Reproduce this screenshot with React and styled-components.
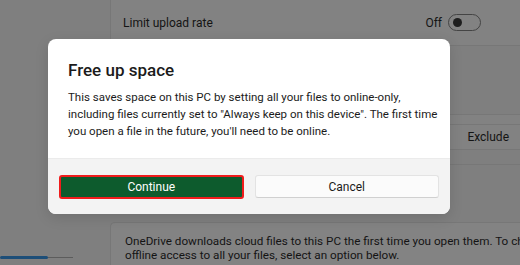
import React from "react";
import styled, { createGlobalStyle } from "styled-components";

const GlobalStyle = createGlobalStyle`
  html, body {
    margin: 0;
    padding: 0;
    width: 520px;
    height: 265px;
    overflow: hidden;
    background: #7f7f7f;
    font-family: Roboto, "Noto Sans", sans-serif;
  }
`;

const Page = styled.div`
  position: relative;
  display: flex;
  width: 520px;
  height: 265px;
  overflow: hidden;
`;

const Sidebar = styled.aside`
  width: 110px;
  flex-shrink: 0;
  display: flex;
  flex-direction: column;
  justify-content: flex-end;
  padding-bottom: 6px;
  box-sizing: border-box;
`;

const Storage = styled.div`
  display: flex;
  align-items: center;
  width: 73px;
`;

const StorageUsed = styled.div`
  width: 48px;
  height: 3px;
  border-radius: 2px;
  background: #1d4e78;
`;

const StorageFree = styled.div`
  flex: 1;
  height: 1px;
  background: #5c5c5c;
`;

const Main = styled.main`
  flex: 1;
  min-width: 0;
  display: flex;
  flex-direction: column;
  overflow: hidden;
`;

const Card = styled.div`
  display: flex;
  align-items: center;
  box-sizing: border-box;
  height: ${p => p.h}px;
  padding: 0 12px;
  background: ${p => (p.dark ? "#7f7f7f" : "#828282")};
  border-left: 1px solid #777;
  border-bottom: 1px solid #777;
  font-size: 12px;
  color: #141414;
`;

const Label = styled.span`
  flex: 1;
`;

const Toggle = styled.span`
  display: inline-flex;
  align-items: center;
  box-sizing: border-box;
  width: 33px;
  height: 17px;
  margin-left: 6px;
  margin-right: 27px;
  padding-left: 4px;
  border: 1px solid #444;
  border-radius: 9px;
  &::before {
    content: "";
    width: 9px;
    height: 9px;
    border-radius: 50%;
    background: #1e1e1e;
  }
`;

const Action = styled.span`
  margin-left: auto;
  margin-right: -1px;
`;

const InfoCard = styled.div`
  margin-top: auto;
  box-sizing: border-box;
  height: 43px;
  padding: 11px 0 0 14px;
  background: #838383;
  border-left: 1px solid #777;
  border-top: 1px solid #777;
  border-top-left-radius: 5px;
  font-size: 11.7px;
  line-height: 14px;
  color: #141414;
  white-space: nowrap;
`;

const Dialog = styled.div`
  position: absolute;
  left: 48px;
  top: 39px;
  width: 402px;
  height: 175px;
  display: flex;
  flex-direction: column;
  border-radius: 8px;
  overflow: hidden;
  background: #fff;
  box-shadow: 0 4px 14px rgba(0, 0, 0, 0.12);
`;

const Body = styled.div`
  flex: 1;
  padding: 19px 12px 0 20px;
`;

const Title = styled.h2`
  margin: 0 0 7px;
  font-size: 17px;
  font-weight: 500;
  line-height: 24px;
  color: #1b1b1b;
`;

const Text = styled.p`
  margin: 0;
  font-size: 11.5px;
  line-height: 17px;
  color: #1b1b1b;
`;

const Footer = styled.div`
  height: 56px;
  box-sizing: border-box;
  display: grid;
  grid-template-columns: 1fr 1fr;
  gap: 11px;
  align-items: center;
  padding: 0 11px;
  background: #f3f3f3;
  border-top: 1px solid #ebebeb;
`;

const Button = styled.button`
  height: ${p => (p.primary ? 24 : 23)}px;
  box-sizing: border-box;
  border-radius: 3px;
  font-family: inherit;
  font-size: 12px;
  color: ${p => (p.primary ? "#fff" : "#1b1b1b")};
  background: ${p => (p.primary ? "#0d5b2d" : "#fbfbfb")};
  border: ${p => (p.primary ? "2px solid #f01c1c" : "1px solid #e3e3e3")};
  border-bottom-color: ${p => (p.primary ? "#f01c1c" : "#d0d0d0")};
  padding: 0;
`;

export default function App() {
  return (
    <>
      <GlobalStyle />
      <Page>
        <Sidebar>
          <Storage>
            <StorageUsed />
            <StorageFree />
          </Storage>
        </Sidebar>
        <Main>
          <Card h={46}>
            <Label>Limit upload rate</Label>
            Off
            <Toggle />
          </Card>
          <Card h={69} dark />
          <Card h={10} />
          <Card h={25}>
            <Action>Exclude</Action>
          </Card>
          <Card h={15} dark />
          <InfoCard>
            OneDrive downloads cloud files to this PC the first time you open them. To change
            <br />
            offline access to all your files, select an option below.
          </InfoCard>
        </Main>
        <Dialog>
          <Body>
            <Title>Free up space</Title>
            <Text>
              This saves space on this PC by setting all your files to online-only,
              including files currently set to "Always keep on this device". The first time
              you open a file in the future, you'll need to be online.
            </Text>
          </Body>
          <Footer>
            <Button primary>Continue</Button>
            <Button>Cancel</Button>
          </Footer>
        </Dialog>
      </Page>
    </>
  );
}
